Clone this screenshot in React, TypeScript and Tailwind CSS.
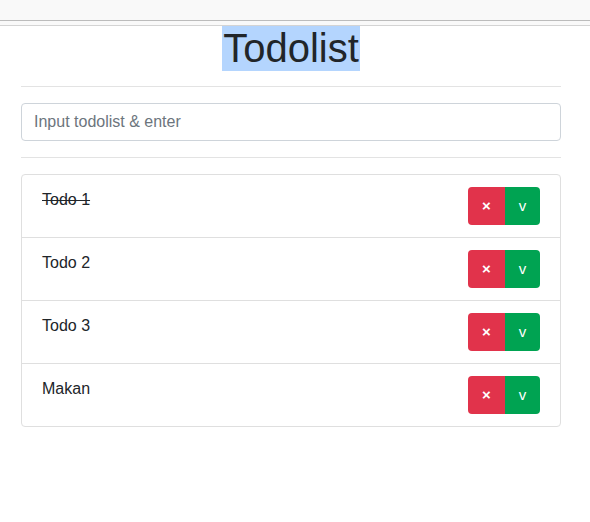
import React from "react";

const todos = [
  { title: "Todo 1", done: true },
  { title: "Todo 2", done: false },
  { title: "Todo 3", done: false },
  { title: "Makan", done: false },
];

function App() {
  return (
    <div className="min-h-[522px] bg-white text-[#212529]" style={{ fontFamily: '"Liberation Sans", Arial, sans-serif' }}>
      <div className="h-[21px] bg-[#f9f9f9] border-b border-[#bcbcbc]" />
      <div className="h-[5px] bg-[#f9f9f9] border-b border-[#d4d4d4]" />
      <main className="w-[540px] ml-[21px]">
        <div className="flex justify-center">
          <h1 className="bg-[#b4d5fe] text-[40px] leading-[45px] font-normal px-px">Todolist</h1>
        </div>
        <hr className="mt-[15px] border-0 border-t border-[#e3e3e3]" />
        <input
          className="mt-[16px] block w-full h-[38px] px-3 text-base border border-[#ced4da] rounded placeholder:text-[#6c757d] outline-none"
          placeholder="Input todolist & enter"
        />
        <hr className="mt-[16px] border-0 border-t border-[#e3e3e3]" />
        <ul className="mt-[16px] border border-[#dfdfdf] rounded">
          {todos.map((todo, i) => (
            <li
              key={todo.title}
              className={`flex justify-between items-start px-5 py-3 ${i > 0 ? "border-t border-[#dfdfdf]" : ""}`}
            >
              <span className={`text-base leading-6 pt-px ${todo.done ? "line-through" : ""}`}>{todo.title}</span>
              <div className="flex">
                <button className="w-[37px] h-[38px] bg-[#e1334b] text-white font-bold text-[15px] rounded-l">×</button>
                <button className="w-[35px] h-[38px] bg-[#00a352] text-white text-[15px] rounded-r">v</button>
              </div>
            </li>
          ))}
        </ul>
      </main>
    </div>
  );
}

export default App;
